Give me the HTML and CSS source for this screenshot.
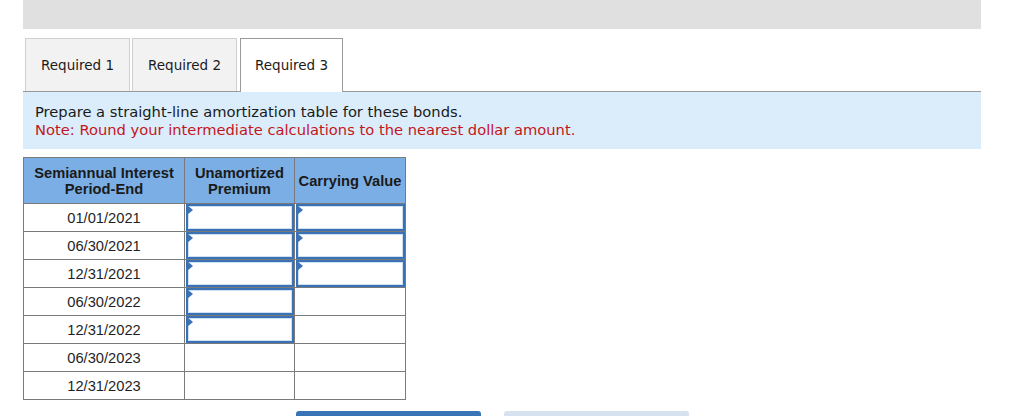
FILE: index.html
```
<!DOCTYPE html>
<html>
<head>
<meta charset="utf-8">
<link rel="stylesheet" href="styles.css">
</head>
<body>
<div class="page">
  <div class="question"></div>
  <div class="tabs">
    <div class="tab">Required 1</div>
    <div class="tab">Required 2</div>
    <div class="tab active">Required 3</div>
  </div>
  <div class="info">
    <div>Prepare a straight-line amortization table for these bonds.</div>
    <div class="note">Note: Round your intermediate calculations to the nearest dollar amount.</div>
  </div>
  <table class="grid">
    <thead>
      <tr>
        <th class="c1">Semiannual Interest<br>Period-End</th>
        <th class="c2">Unamortized<br>Premium</th>
        <th class="c3">Carrying Value</th>
      </tr>
    </thead>
    <tbody>
      <tr><td>01/01/2021</td><td class="in"><div class="box"></div></td><td class="in"><div class="box"></div></td></tr>
      <tr><td>06/30/2021</td><td class="in"><div class="box"></div></td><td class="in"><div class="box"></div></td></tr>
      <tr><td>12/31/2021</td><td class="in"><div class="box"></div></td><td class="in"><div class="box"></div></td></tr>
      <tr><td>06/30/2022</td><td class="in"><div class="box"></div></td><td></td></tr>
      <tr><td>12/31/2022</td><td class="in"><div class="box"></div></td><td></td></tr>
      <tr><td>06/30/2023</td><td></td><td></td></tr>
      <tr><td>12/31/2023</td><td></td><td></td></tr>
    </tbody>
  </table>
  <div class="buttons">
    <div class="btn prev"></div>
    <div class="btn next"></div>
  </div>
</div>
</body>
</html>
```
FILE: styles.css
```
html, body {
  margin: 0;
  padding: 0;
  background: #fff;
}
body {
  font-family: "DejaVu Sans", Verdana, sans-serif;
  overflow: hidden;
  height: 416px;
}
.page {
  width: 958px;
  margin-left: 23px;
}
.question {
  height: 29px;
  background: #e0e0e0;
}
.tabs {
  display: flex;
  align-items: flex-end;
  margin-top: 9px;
  padding-left: 2px;
  height: 53px;
  border-bottom: 1px solid #999;
}
.tab {
  box-sizing: border-box;
  width: 105px;
  height: 53px;
  margin-right: 2px;
  border: 1px solid #cfcfcf;
  border-bottom: none;
  background: #f2f2f2;
  font-size: 13.5px;
  color: #1b1b1b;
  display: flex;
  align-items: center;
  justify-content: center;
  padding-bottom: 1px;
}
.tab:nth-child(2) { margin-right: 3px; }
.tab.active {
  width: 103px;
  height: 54px;
  margin-bottom: -1px;
  background: #fff;
  border-color: #9a9a9a;
  padding-bottom: 2px;
}
.info {
  background: #dbedfa;
  height: 57px;
  box-sizing: border-box;
  padding: 11px 12px 0;
  font-size: 14.7px;
  line-height: 18px;
  color: #1a1a1a;
}
.note {
  color: #c3161c;
}
.grid {
  margin-top: 8px;
  border-collapse: collapse;
  font-family: "Liberation Sans", Arial, sans-serif;
  font-size: 14.7px;
  color: #1f1f1f;
}
.grid th, .grid td {
  border: 1px solid #7a7a7a;
  padding: 0;
  text-align: center;
}
.grid th {
  background: #7aaee4;
  font-weight: bold;
  height: 45px;
  line-height: 16px;
  color: #1a1a1a;
}
.c1 { width: 160px; }
.c2 { width: 109px; }
.c3 { width: 110px; }
.grid td {
  height: 27px;
  line-height: 16px;
  padding-top: 0;
}
.grid td.in {
  padding: 0;
}
.box {
  box-sizing: border-box;
  height: 27px;
  margin: 0 0 0 1px;
  border: 2px solid #3b72b6;
  box-shadow: inset 0 0 0 1px #cfe0f3;
  position: relative;
}
.box::before {
  content: "";
  position: absolute;
  left: -1px;
  top: -1px;
  width: 0;
  height: 0;
  border-top: 5px solid transparent;
  border-bottom: 5px solid transparent;
  border-left: 6px solid #3b72b6;
}
.buttons {
  display: flex;
  margin-top: 11px;
  padding-left: 273px;
  gap: 23px;
}
.btn {
  width: 185px;
  height: 20px;
  border-radius: 3px 3px 0 0;
}
.prev { background: #3a74b8; }
.next { background: #d6e2f0; }
```
